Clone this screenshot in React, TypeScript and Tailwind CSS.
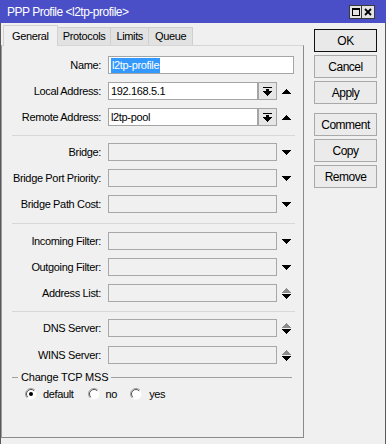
import React from "react";

const FONT = "font-['Liberation_Sans',Arial,sans-serif]";

function Tri({ dir = "down", color = "#000" }: { dir?: "down" | "up"; color?: string }) {
  const rows = [9, 7, 5, 3, 1];
  const r = dir === "down" ? rows : [...rows].reverse();
  return (
    <svg width="9" height="5" viewBox="0 0 9 5" shapeRendering="crispEdges">
      {r.map((w, i) => (
        <rect key={i} x={(9 - w) / 2} y={i} width={w} height={1} fill={color} />
      ))}
    </svg>
  );
}

function Spinner() {
  const up = [1, 3, 5, 7, 9];
  const down = [9, 7, 5, 3, 1];
  return (
    <svg width="9" height="11" viewBox="0 0 9 11" shapeRendering="crispEdges">
      {up.map((w, i) => (
        <rect key={"u" + i} x={(9 - w) / 2} y={i} width={w} height={1} fill="#8c8c8c" />
      ))}
      {down.map((w, i) => (
        <rect key={"d" + i} x={(9 - w) / 2} y={6 + i} width={w} height={1} fill="#000" />
      ))}
    </svg>
  );
}

function DropIcon() {
  const tri = [9, 7, 5, 3, 1];
  return (
    <svg width="9" height="9" viewBox="0 0 9 9" shapeRendering="crispEdges">
      <rect x={0} y={0} width={9} height={1} fill="#000" />
      <rect x={3} y={2} width={3} height={2} fill="#000" />
      {tri.map((w, i) => (
        <rect key={i} x={(9 - w) / 2} y={4 + i} width={w} height={1} fill="#000" />
      ))}
    </svg>
  );
}

function Radio({ checked }: { checked?: boolean }) {
  return (
    <svg width="12" height="12" viewBox="0 0 12 12">
      <circle cx="6" cy="6" r="5.5" fill="#ffffff" />
      <path d="M 2.1 9.9 A 5.5 5.5 0 0 1 9.9 2.1" fill="none" stroke="#a0a0a0" strokeWidth="1" />
      <path d="M 2.8 9.2 A 4.5 4.5 0 0 1 9.2 2.8" fill="none" stroke="#555555" strokeWidth="1" />
      {checked && <circle cx="6" cy="6" r="2" fill="#000" />}
    </svg>
  );
}

function Label({ children }: { children: React.ReactNode }) {
  return (
    <div className="w-[99px] shrink-0 text-right text-[11px] tracking-[-0.35px] text-black leading-[18px] whitespace-nowrap">
      {children}
    </div>
  );
}

function Row({ label, children }: { label: string; children: React.ReactNode }) {
  return (
    <div className="flex items-center h-[18px]">
      <Label>{label}:</Label>
      <div className="ml-[7px] flex items-center h-[18px]">{children}</div>
    </div>
  );
}

function WhiteInput({ w, children }: { w: number; children?: React.ReactNode }) {
  return (
    <div
      className="h-[18px] bg-white border border-[#a5a5a5] flex items-center pl-[2px] text-[11px] tracking-[-0.35px] text-black whitespace-nowrap overflow-hidden"
      style={{ width: w }}
    >
      {children}
    </div>
  );
}

function GrayInput() {
  return <div className="h-[18px] w-[169px] bg-[#f0f0f0] border border-[#a8a8a8]" />;
}

function DropRow({ label, value }: { label: string; value: string }) {
  return (
    <Row label={label}>
      <WhiteInput w={150}>{value}</WhiteInput>
      <div className="h-[18px] w-[19px] bg-[#e6e6e6] border border-[#a5a5a5] flex items-center justify-center">
        <DropIcon />
      </div>
      <div className="ml-[5px] flex items-center">
        <Tri dir="up" />
      </div>
    </Row>
  );
}

function ArrowRow({ label, spin }: { label: string; spin?: boolean }) {
  return (
    <Row label={label}>
      <GrayInput />
      <div className="ml-[5px] flex items-center">{spin ? <Spinner /> : <Tri dir="down" />}</div>
    </Row>
  );
}

function Sep({ mt }: { mt: string }) {
  return <div className={`${mt} ml-[10px] w-[283px] h-px bg-[#d8d8d8]`} />;
}

function Btn({ children, def }: { children: React.ReactNode; def?: boolean }) {
  return (
    <div
      className={`w-[63px] h-[23px] flex items-center justify-center text-[12px] tracking-[-0.5px] text-black ${
        def ? "border border-[#111111] bg-[#e9e9e9]" : "border border-[#a9a9a9] bg-[#ebebeb]"
      }`}
    >
      {children}
    </div>
  );
}

export default function App() {
  return (
    <div className={`${FONT} w-[386px] h-[444px] bg-[#f0f0f0] flex flex-col overflow-hidden`}>
      {/* title bar */}
      <div className="h-[23px] bg-[#4a4fc7] flex items-center pl-[7px] pr-[11px] shrink-0">
        <div className="text-white text-[12px] tracking-[-0.5px] whitespace-nowrap">PPP Profile &lt;l2tp-profile&gt;</div>
        <div className="ml-auto flex">
          <div className="w-[13px] h-[14px] bg-[#e4e4e4] border border-[#3a3a3a] flex items-center justify-center">
            <div className="w-[8px] h-[8px] border border-black border-t-2" />
          </div>
          <div className="w-[13px] h-[14px] bg-[#e4e4e4] border border-[#3a3a3a] border-l-0 flex items-center justify-center">
            <svg width="8" height="8" viewBox="0 0 8 8">
              <path d="M1 1 L7 7 M7 1 L1 7" stroke="#000" strokeWidth="1.8" />
            </svg>
          </div>
        </div>
      </div>

      {/* body */}
      <div className="flex-1 flex border-l border-r border-[#5a5a5a]">
        {/* left column */}
        <div className="w-[303px] flex flex-col pt-[2px] pb-[6px]">
          {/* tabs */}
          <div className="h-[21px] flex items-end pl-[2px] relative z-10">
            <div className="h-[21px] px-[8px] bg-[#f0f0f0] border-l border-t border-r border-[#d2d2d2] flex items-center text-[11px] tracking-[-0.35px] text-black">
              General
            </div>
            <div className="h-[18px] mb-[1px] px-[5px] bg-[#e2e2e2] border-t border-r border-[#cfcfcf] flex items-center text-[11px] tracking-[-0.35px] text-black">
              Protocols
            </div>
            <div className="h-[18px] mb-[1px] px-[5px] bg-[#e2e2e2] border-t border-r border-[#cfcfcf] flex items-center text-[11px] tracking-[-0.35px] text-black">
              Limits
            </div>
            <div className="h-[18px] mb-[1px] px-[6px] bg-[#e2e2e2] border-t border-r border-[#cfcfcf] flex items-center text-[11px] tracking-[-0.35px] text-black">
              Queue
            </div>
          </div>

          {/* panel */}
          <div className="-mt-[1px] flex-1 border border-[#8a8a8a] border-t-[#d6d6d6] border-l-[#9a9a9a] flex flex-col pt-[10px]">
            <div className="flex flex-col gap-[8px]">
              <Row label="Name">
                <div className="h-[18px] w-[186px] bg-white border border-[#a5a5a5] flex items-center pl-[2px]">
                  <span className="bg-[#3399ff] text-white text-[11px] tracking-[-0.35px] leading-[15px] px-[1px] whitespace-nowrap">
                    l2tp-profile
                  </span>
                </div>
              </Row>
              <DropRow label="Local Address" value="192.168.5.1" />
              <DropRow label="Remote Address" value="l2tp-pool" />
            </div>
            <Sep mt="mt-[9px]" />
            <div className="mt-[7px] flex flex-col gap-[8px]">
              <ArrowRow label="Bridge" />
              <ArrowRow label="Bridge Port Priority" />
              <ArrowRow label="Bridge Path Cost" />
            </div>
            <Sep mt="mt-[10px]" />
            <div className="mt-[8px] flex flex-col gap-[8px]">
              <ArrowRow label="Incoming Filter" />
              <ArrowRow label="Outgoing Filter" />
              <ArrowRow label="Address List" spin />
            </div>
            <Sep mt="mt-[9px]" />
            <div className="mt-[7px] flex flex-col gap-[9px]">
              <ArrowRow label="DNS Server" spin />
              <ArrowRow label="WINS Server" spin />
            </div>
            {/* group */}
            <div className="mt-[6px] h-[14px] flex items-center">
              <div className="ml-[10px] w-[6px] h-px bg-[#a0a0a0]" />
              <div className="ml-[3px] text-[11px] tracking-[-0.2px] text-black whitespace-nowrap leading-[14px]">
                Change TCP MSS
              </div>
              <div className="ml-[3px] w-[181px] h-px bg-[#a0a0a0]" />
            </div>
            <div className="mt-[4px] h-[12px] flex items-center ml-[23px] text-[11px] tracking-[-0.35px] text-black">
              <Radio checked />
              <span className="ml-[6px]">default</span>
              <span className="ml-[14px] flex items-center">
                <Radio />
              </span>
              <span className="ml-[6px]">no</span>
              <span className="ml-[13px] flex items-center">
                <Radio />
              </span>
              <span className="ml-[7px]">yes</span>
            </div>
          </div>
        </div>

        {/* right column */}
        <div className="ml-[10px] pt-[6px] flex flex-col gap-[3px]">
          <Btn def>OK</Btn>
          <Btn>Cancel</Btn>
          <Btn>Apply</Btn>
          <div className="mt-[6px]">
            <Btn>Comment</Btn>
          </div>
          <Btn>Copy</Btn>
          <Btn>Remove</Btn>
        </div>
      </div>
    </div>
  );
}
